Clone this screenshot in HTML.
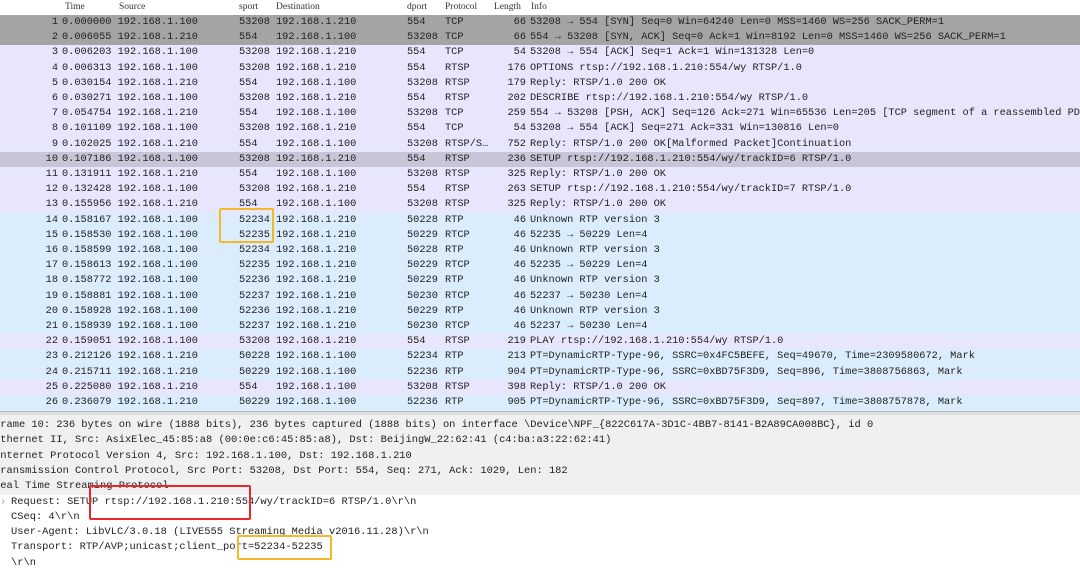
<!DOCTYPE html>
<html><head><meta charset="utf-8"><style>
body{margin:0;width:1080px;height:570px;overflow:hidden;background:#fff;position:relative;font-family:"Liberation Mono",monospace;}
#hdr{position:absolute;left:0;top:0;width:1080px;height:15px;background:#fff;font-family:"Liberation Serif",serif;font-size:9.5px;color:#333;}
#hdr span{position:absolute;top:2px}
#list{position:absolute;left:0;top:15px;width:1080px;height:396px;overflow:hidden}
.r{position:absolute;left:0;width:1080px;height:15.2px;font-size:10.3px;line-height:15.2px;color:#222;white-space:pre}
.r span{position:absolute;top:0}
.n{right:1022px;text-align:right}
.t{left:62px}.sp{left:239px}.ds{left:276px}.dp{left:407px}.pr{left:445px}
.ln{right:554px;text-align:right}.in{left:530px}
.g{background:#a4a4a4}.l{background:#e7e6fd}.s{background:#c8c6d6}.b{background:#dbedfc}
#sep{position:absolute;left:0;top:411px;width:1080px;height:4px;background:#dcdcdc;border-top:1px solid #bbb}
#det{position:absolute;left:0;top:415px;width:1080px;height:155px;font-size:10.4px;color:#222;white-space:pre}
.d{position:absolute;height:15.3px;line-height:15.3px;width:1080px}
.box{position:absolute;border:2px solid;border-radius:2px}
</style></head><body>
<div id="hdr"><span style="left:65px">Time</span><span style="left:119px">Source</span><span style="left:239px">sport</span><span style="left:276px">Destination</span><span style="left:407px">dport</span><span style="left:445px">Protocol</span><span style="left:494px">Length</span><span style="left:531px">Info</span></div>
<div id="list">
<div class="r g" style="top:0px"><span class="n">1</span><span class="t">0.000000 192.168.1.100</span><span class="sp">53208</span><span class="ds">192.168.1.210</span><span class="dp">554</span><span class="pr">TCP</span><span class="ln">66</span><span class="in">53208 → 554 [SYN] Seq=0 Win=64240 Len=0 MSS=1460 WS=256 SACK_PERM=1</span></div>
<div class="r g" style="top:15.2px"><span class="n">2</span><span class="t">0.006055 192.168.1.210</span><span class="sp">554</span><span class="ds">192.168.1.100</span><span class="dp">53208</span><span class="pr">TCP</span><span class="ln">66</span><span class="in">554 → 53208 [SYN, ACK] Seq=0 Ack=1 Win=8192 Len=0 MSS=1460 WS=256 SACK_PERM=1</span></div>
<div class="r l" style="top:30.4px"><span class="n">3</span><span class="t">0.006203 192.168.1.100</span><span class="sp">53208</span><span class="ds">192.168.1.210</span><span class="dp">554</span><span class="pr">TCP</span><span class="ln">54</span><span class="in">53208 → 554 [ACK] Seq=1 Ack=1 Win=131328 Len=0</span></div>
<div class="r l" style="top:45.6px"><span class="n">4</span><span class="t">0.006313 192.168.1.100</span><span class="sp">53208</span><span class="ds">192.168.1.210</span><span class="dp">554</span><span class="pr">RTSP</span><span class="ln">176</span><span class="in">OPTIONS rtsp://192.168.1.210:554/wy RTSP/1.0</span></div>
<div class="r l" style="top:60.8px"><span class="n">5</span><span class="t">0.030154 192.168.1.210</span><span class="sp">554</span><span class="ds">192.168.1.100</span><span class="dp">53208</span><span class="pr">RTSP</span><span class="ln">179</span><span class="in">Reply: RTSP/1.0 200 OK</span></div>
<div class="r l" style="top:76px"><span class="n">6</span><span class="t">0.030271 192.168.1.100</span><span class="sp">53208</span><span class="ds">192.168.1.210</span><span class="dp">554</span><span class="pr">RTSP</span><span class="ln">202</span><span class="in">DESCRIBE rtsp://192.168.1.210:554/wy RTSP/1.0</span></div>
<div class="r l" style="top:91.2px"><span class="n">7</span><span class="t">0.054754 192.168.1.210</span><span class="sp">554</span><span class="ds">192.168.1.100</span><span class="dp">53208</span><span class="pr">TCP</span><span class="ln">259</span><span class="in">554 → 53208 [PSH, ACK] Seq=126 Ack=271 Win=65536 Len=205 [TCP segment of a reassembled PDU]</span></div>
<div class="r l" style="top:106.4px"><span class="n">8</span><span class="t">0.101109 192.168.1.100</span><span class="sp">53208</span><span class="ds">192.168.1.210</span><span class="dp">554</span><span class="pr">TCP</span><span class="ln">54</span><span class="in">53208 → 554 [ACK] Seq=271 Ack=331 Win=130816 Len=0</span></div>
<div class="r l" style="top:121.6px"><span class="n">9</span><span class="t">0.102025 192.168.1.210</span><span class="sp">554</span><span class="ds">192.168.1.100</span><span class="dp">53208</span><span class="pr">RTSP/S…</span><span class="ln">752</span><span class="in">Reply: RTSP/1.0 200 OK[Malformed Packet]Continuation</span></div>
<div class="r s" style="top:136.8px"><span class="n">10</span><span class="t">0.107186 192.168.1.100</span><span class="sp">53208</span><span class="ds">192.168.1.210</span><span class="dp">554</span><span class="pr">RTSP</span><span class="ln">236</span><span class="in">SETUP rtsp://192.168.1.210:554/wy/trackID=6 RTSP/1.0</span></div>
<div class="r l" style="top:152px"><span class="n">11</span><span class="t">0.131911 192.168.1.210</span><span class="sp">554</span><span class="ds">192.168.1.100</span><span class="dp">53208</span><span class="pr">RTSP</span><span class="ln">325</span><span class="in">Reply: RTSP/1.0 200 OK</span></div>
<div class="r l" style="top:167.2px"><span class="n">12</span><span class="t">0.132428 192.168.1.100</span><span class="sp">53208</span><span class="ds">192.168.1.210</span><span class="dp">554</span><span class="pr">RTSP</span><span class="ln">263</span><span class="in">SETUP rtsp://192.168.1.210:554/wy/trackID=7 RTSP/1.0</span></div>
<div class="r l" style="top:182.4px"><span class="n">13</span><span class="t">0.155956 192.168.1.210</span><span class="sp">554</span><span class="ds">192.168.1.100</span><span class="dp">53208</span><span class="pr">RTSP</span><span class="ln">325</span><span class="in">Reply: RTSP/1.0 200 OK</span></div>
<div class="r b" style="top:197.6px"><span class="n">14</span><span class="t">0.158167 192.168.1.100</span><span class="sp">52234</span><span class="ds">192.168.1.210</span><span class="dp">50228</span><span class="pr">RTP</span><span class="ln">46</span><span class="in">Unknown RTP version 3</span></div>
<div class="r b" style="top:212.8px"><span class="n">15</span><span class="t">0.158530 192.168.1.100</span><span class="sp">52235</span><span class="ds">192.168.1.210</span><span class="dp">50229</span><span class="pr">RTCP</span><span class="ln">46</span><span class="in">52235 → 50229 Len=4</span></div>
<div class="r b" style="top:228px"><span class="n">16</span><span class="t">0.158599 192.168.1.100</span><span class="sp">52234</span><span class="ds">192.168.1.210</span><span class="dp">50228</span><span class="pr">RTP</span><span class="ln">46</span><span class="in">Unknown RTP version 3</span></div>
<div class="r b" style="top:243.2px"><span class="n">17</span><span class="t">0.158613 192.168.1.100</span><span class="sp">52235</span><span class="ds">192.168.1.210</span><span class="dp">50229</span><span class="pr">RTCP</span><span class="ln">46</span><span class="in">52235 → 50229 Len=4</span></div>
<div class="r b" style="top:258.4px"><span class="n">18</span><span class="t">0.158772 192.168.1.100</span><span class="sp">52236</span><span class="ds">192.168.1.210</span><span class="dp">50229</span><span class="pr">RTP</span><span class="ln">46</span><span class="in">Unknown RTP version 3</span></div>
<div class="r b" style="top:273.6px"><span class="n">19</span><span class="t">0.158881 192.168.1.100</span><span class="sp">52237</span><span class="ds">192.168.1.210</span><span class="dp">50230</span><span class="pr">RTCP</span><span class="ln">46</span><span class="in">52237 → 50230 Len=4</span></div>
<div class="r b" style="top:288.8px"><span class="n">20</span><span class="t">0.158928 192.168.1.100</span><span class="sp">52236</span><span class="ds">192.168.1.210</span><span class="dp">50229</span><span class="pr">RTP</span><span class="ln">46</span><span class="in">Unknown RTP version 3</span></div>
<div class="r b" style="top:304px"><span class="n">21</span><span class="t">0.158939 192.168.1.100</span><span class="sp">52237</span><span class="ds">192.168.1.210</span><span class="dp">50230</span><span class="pr">RTCP</span><span class="ln">46</span><span class="in">52237 → 50230 Len=4</span></div>
<div class="r l" style="top:319.2px"><span class="n">22</span><span class="t">0.159051 192.168.1.100</span><span class="sp">53208</span><span class="ds">192.168.1.210</span><span class="dp">554</span><span class="pr">RTSP</span><span class="ln">219</span><span class="in">PLAY rtsp://192.168.1.210:554/wy RTSP/1.0</span></div>
<div class="r b" style="top:334.4px"><span class="n">23</span><span class="t">0.212126 192.168.1.210</span><span class="sp">50228</span><span class="ds">192.168.1.100</span><span class="dp">52234</span><span class="pr">RTP</span><span class="ln">213</span><span class="in">PT=DynamicRTP-Type-96, SSRC=0x4FC5BEFE, Seq=49670, Time=2309580672, Mark</span></div>
<div class="r b" style="top:349.6px"><span class="n">24</span><span class="t">0.215711 192.168.1.210</span><span class="sp">50229</span><span class="ds">192.168.1.100</span><span class="dp">52236</span><span class="pr">RTP</span><span class="ln">904</span><span class="in">PT=DynamicRTP-Type-96, SSRC=0xBD75F3D9, Seq=896, Time=3808756863, Mark</span></div>
<div class="r l" style="top:364.8px"><span class="n">25</span><span class="t">0.225080 192.168.1.210</span><span class="sp">554</span><span class="ds">192.168.1.100</span><span class="dp">53208</span><span class="pr">RTSP</span><span class="ln">398</span><span class="in">Reply: RTSP/1.0 200 OK</span></div>
<div class="r b" style="top:380px"><span class="n">26</span><span class="t">0.236079 192.168.1.210</span><span class="sp">50229</span><span class="ds">192.168.1.100</span><span class="dp">52236</span><span class="pr">RTP</span><span class="ln">905</span><span class="in">PT=DynamicRTP-Type-96, SSRC=0xBD75F3D9, Seq=897, Time=3808757878, Mark</span></div>
<div class="r b" style="top:395.2px"><span class="n">27</span><span class="t">0.250301 192.168.1.210</span><span class="sp">50228</span><span class="ds">192.168.1.100</span><span class="dp">52234</span><span class="pr">RTP</span><span class="ln">913</span><span class="in">PT=DynamicRTP-Type-96, SSRC=0x4FC5BEFE, Seq=49671, Time=2309584272, Mark</span></div>
</div>
<div id="sep"></div>
<div id="det">
<div style="position:absolute;left:0;top:0;width:1080px;height:80px;background:#f0f0f0"></div>
<div class="d" style="top:3px;left:-6px">Frame 10: 236 bytes on wire (1888 bits), 236 bytes captured (1888 bits) on interface \Device\NPF_{822C617A-3D1C-4BB7-8141-B2A89CA008BC}, id 0</div>
<div class="d" style="top:18.3px;left:-6px">Ethernet II, Src: AsixElec_45:85:a8 (00:0e:c6:45:85:a8), Dst: BeijingW_22:62:41 (c4:ba:a3:22:62:41)</div>
<div class="d" style="top:33.6px;left:-6px">Internet Protocol Version 4, Src: 192.168.1.100, Dst: 192.168.1.210</div>
<div class="d" style="top:48.9px;left:-6px">Transmission Control Protocol, Src Port: 53208, Dst Port: 554, Seq: 271, Ack: 1029, Len: 182</div>
<div class="d" style="top:64.2px;left:-6px">Real Time Streaming Protocol</div>
<div class="d" style="top:79.5px;left:0px;color:#999">›</div>
<div class="d" style="top:79.5px;left:11px">Request: SETUP rtsp://192.168.1.210:554/wy/trackID=6 RTSP/1.0\r\n</div>
<div class="d" style="top:94.8px;left:11px">CSeq: 4\r\n</div>
<div class="d" style="top:110.1px;left:11px">User-Agent: LibVLC/3.0.18 (LIVE555 Streaming Media v2016.11.28)\r\n</div>
<div class="d" style="top:125.4px;left:11px">Transport: RTP/AVP;unicast;client_port=52234-52235</div>
<div class="d" style="top:140.7px;left:11px">\r\n</div>
</div>
<div class="box" style="left:219px;top:208px;width:51px;height:31px;border-color:#f5b82a"></div>
<div class="box" style="left:89px;top:485px;width:158px;height:31px;border-color:#e8282a"></div>
<div class="box" style="left:237px;top:535px;width:91px;height:21px;border-color:#f5b82a"></div>
</body></html>
